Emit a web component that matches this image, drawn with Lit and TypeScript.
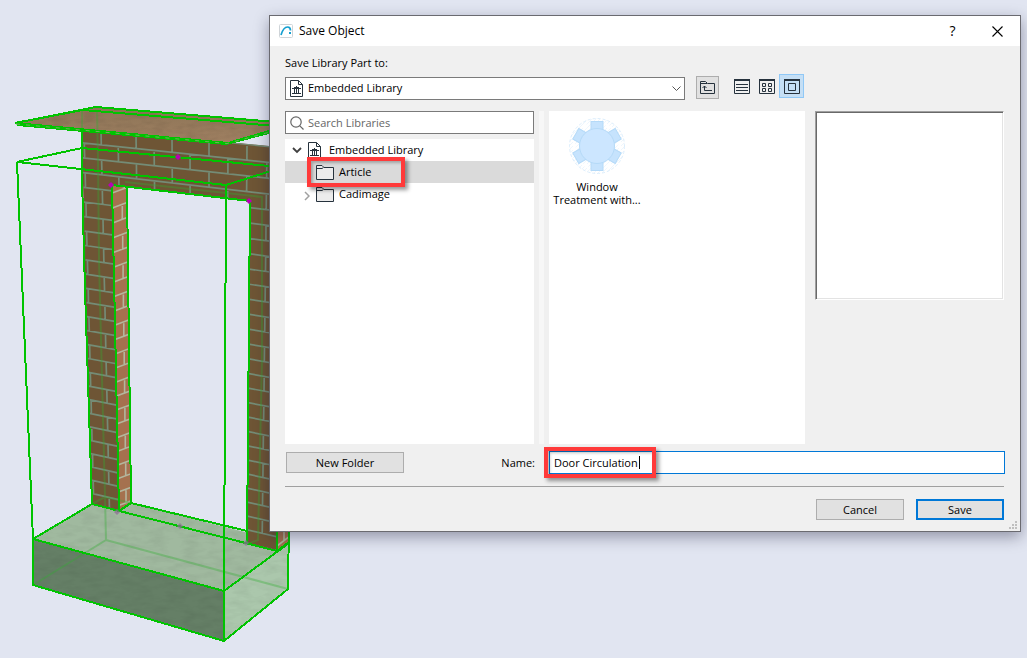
import { LitElement, html, svg, css } from "lit";
import { customElement, property, state } from "lit/decorators.js";

type Pt = [number, number];

const line = (...pts: Pt[]) => "M" + pts.map((p) => p.map((n) => n.toFixed(1)).join(" ")).join("L");

/* Brick courses of the front wall, drawn in the wall's own perspective. */
const frontMortar = (() => {
  const place = (x: number, y: number): Pt => {
    const t = (y - 130) / 374;
    const px = x + t * (10 - (x - 82) * 0.081);
    return [px, y + (px - 82) * (0.1 + 0.14 * t)];
  };
  const even = [101, 136, 172, 209, 247, 286];
  const odd = [84, 118, 154, 190, 228, 267, 300];
  let d = "";
  let y = 128;
  let step = 14.9;
  for (let row = 0; y < 510; row++) {
    const next = y + step;
    d += line(place(82, y), place(300, y));
    for (const x of row % 2 ? odd : even) d += line(place(x, y), place(x, next));
    y = next;
    step -= 0.075;
  }
  return d;
})();

const sideMortar = (() => {
  let d = "";
  let y = 191;
  let step = 15;
  for (let row = 0; y < 520; row++) {
    const lean = ((y - 185) / 320) * 6;
    d += line([112 + lean, y + 2], [128 + lean, y - 4]);
    if (row % 2) d += line([122 + lean * 0.7, y], [122 + lean * 0.7, y + step - 1]);
    y += step;
    step -= 0.075;
  }
  return d;
})();

@customElement("model-view")
export class ModelView extends LitElement {
  static styles = css`
    :host { display: block; overflow: hidden; }
    svg { display: block; }
    .edge { fill: none; stroke: #00c400; stroke-width: 2; shape-rendering: crispEdges; }
    .hidden { fill: none; stroke: #30b030; stroke-width: 2; opacity: 0.35; }
    .front { stroke: #748c76; stroke-width: 1.7; fill: none; }
    .side { stroke: #b3b69d; stroke-width: 1.6; fill: none; }
  `;

  render() {
    const spots: Pt[] = [[178, 157], [111, 185], [249, 201]];
    const faint: Pt[] = [[117, 512], [180, 526], [246, 543]];
    return html`<svg width="300" height="658" viewBox="0 0 300 658" role="img" aria-label="Brick door model">
      <defs>
        <linearGradient id="roof" x1="0" y1="0" x2="0" y2="1">
          <stop offset="0" stop-color="#8c7456" /><stop offset="1" stop-color="#a08062" />
        </linearGradient>
        <filter id="grain" x="0" y="0" width="1" height="1">
          <feTurbulence type="fractalNoise" baseFrequency="0.06 0.16" numOctaves="3" seed="4" />
          <feColorMatrix values="0 0 0 0 0  0 0 0 0 0  0 0 0 0 0  0.8 0 0 0 -0.3" />
          <feComposite in2="SourceGraphic" operator="in" />
        </filter>
        <clipPath id="frontClip"><path d="M82 128L289 148V542L277 551L247 544L250 201L112 185L119 511L92 504L85 290Z" /></clipPath>
        <clipPath id="sideClip"><path d="M112 185L127 188L131 503L119 511Z" /></clipPath>
      </defs>
      <path fill="#a0b99f" d="M33 539L92 504L131 503L289 543L224 591Z" />
      <path fill="#657f66" d="M33 539L224 591V641L33 585Z" />
      <path fill="#abc7ac" d="M224 591L289 543V589L224 641Z" />
      <path opacity="0.14" filter="url(#grain)" d="M33 539L92 504L131 503L289 543V589L224 641L33 585Z" />
      <g clip-path="url(#frontClip)">
        <rect x="80" y="120" width="220" height="440" fill="#6e5535" />
        <path class="front" d=${frontMortar} />
        <path fill="#a5714f" d="M277 400H300V545L277 551Z" />
        <path class="side" d="M277 546L290 536M284 541V530" />
      </g>
      <g clip-path="url(#sideClip)">
        <rect x="110" y="180" width="24" height="335" fill="#a5714f" />
        <path class="side" d=${sideMortar} />
      </g>
      <path fill="url(#roof)" d="M15 123L96 107L300 123V125L228 143Z" />
      <path opacity="0.2" filter="url(#grain)" d="M15 123L96 107L300 123V125L228 143Z" />
      <path class="hidden" d="M82 110V130M97 110L98 160L99 260L105 497L106 540L33 585M106 540L288 589M105 497L92 504M105 497L131 503M125 182L262 197L262 360L258 540L247 544" />
      <path class="edge" d="M15 123L96 107L300 124M83 110L300 128M15 123L228 143L300 122M17 125L226 144L300 125M15 123L83 110
        M82 130V178L85 290L92 504M112 185L250 201L247 544M112 185L119 511M127 188L131 503
        M17 162L82 148L300 169M17 162L226 185L300 162M17 162L33 539M226 185L224 591
        M33 539L92 504L277 551L289 542M131 503L247 531M119 511L131 503M33 539L224 591L289 543M33 539V585L224 641L288 589L289 520M224 591V641M277 520V551" />
      <path fill="none" stroke="#75ac60" stroke-dasharray="4 6" d="M16 124L227 143.500L300 124" />
      ${spots.map(([x, y]) => svg`<path fill="#b800b8" d="M${x} ${y - 3}l3 3l-3 3l-3 -3z" />`)}
      ${faint.map(([x, y]) => svg`<path fill="#8c6a94" opacity=".7" d="M${x} ${y - 3}l3 3l-3 3l-3 -3z" />`)}
    </svg>`;
  }
}

const libraryIcon = svg`<svg class="glyph" width="13" height="17" viewBox="0 0 13 17" fill="none" stroke="#26323d">
  <path d="M8.500 .5H.5V16.500H12.500V4.500Z" fill="#fff" /><path d="M8.500 .5V4.500H12.500" />
  <path d="M2 8.500H11M4 7.500H9M6 6.500H7" /><path d="M4.500 9V13M6.500 9V13M8.500 9V13" /><path d="M2 13.500H11" />
</svg>`;

const folderIcon = svg`<svg class="glyph" width="18" height="15" viewBox="0 0 18 15" fill="#ececec" stroke="#26323d">
  <path d="M.5 14.500V.5H6L8 2.500H17.500V14.500Z" /><path d="M.5 3.500H6L7.500 2.500" fill="none" />
</svg>`;

const frame = svg`<path d="M.5 1V14.500H15.500V1" /><path d="M0 1H16" stroke-width="2" />`;

const viewModes = [
  { id: "list", label: "List", art: svg`${frame}<path d="M2 5.500H14M2 8.500H14M2 11.500H14" />` },
  { id: "grid", label: "Small icons", art: svg`${frame}<path d="M3.500 4.500h3v3h-3zM9.500 4.500h3v3h-3zM3.500 9.500h3v3h-3zM9.500 9.500h3v3h-3z" />` },
  { id: "large", label: "Large icons", art: svg`${frame}<path d="M4.500 4.500h7v7h-7z" />` },
];

@customElement("save-dialog")
export class SaveDialog extends LitElement {
  @property() heading = "Save Object";
  @state() private view = "large";

  static styles = css`
    :host {
      display: block;
      box-sizing: border-box;
      border: 1px solid #6a6a70;
      background: #f0f0f0;
      color: #000;
      font: 11px/16px "Open Sans", "Noto Sans", sans-serif;
      box-shadow: 0 5px 14px rgba(20, 20, 50, 0.38);
      position: relative;
    }
    * { box-sizing: border-box; }
    svg { display: block; flex: none; }
    button, input, select { font: inherit; color: inherit; margin: 0; border-radius: 0; outline: none; }
    header { display: flex; align-items: center; height: 30px; padding: 0; padding-left: 9px; background: #fff; }
    h1 { flex: 1; margin: 0 0 0 6px; font: inherit; font-size: 12px; }
    .caption { display: grid; place-items: center; width: 45px; height: 30px; padding: 0; border: 0; background: none; font-size: 14px; }
    .body { padding: 9px 16px 11px 15px; }
    .toolbar { display: flex; align-items: center; margin: 3px 0 11px; height: 26px; }
    .combo { position: relative; width: 400px; height: 23px; margin-top: 2px; }
    .combo select { appearance: none; display: block; width: 100%; height: 100%; padding: 0 24px 0 22px; border: 1px solid #7a7a7a; background: #fff; }
    .combo .glyph { position: absolute; left: 5px; top: 3px; pointer-events: none; }
    .combo .chevron { position: absolute; right: 4px; top: 9px; pointer-events: none; }
    .up { display: grid; place-items: center; width: 23px; height: 23px; margin: 0 10px 0 11px; padding: 0; border: 1px solid #adadad; background: #e1e1e1; }
    .modes { display: flex; align-self: flex-start; }
    .mode { display: grid; place-items: center; width: 25px; height: 24px; padding: 0; border: 1px solid transparent; background: none; }
    .mode.active { border-color: #90c8f6; background: #c5dff5; }
    .panes { display: grid; grid-template-columns: 249px 5px minmax(0, 1fr) 189px; column-gap: 5px; height: 333px; }
    .libraries { display: flex; flex-direction: column; gap: 5px; }
    .search { display: flex; align-items: center; gap: 4px; height: 23px; padding: 0 4px; border: 1px solid #7a7a7a; background: #fff; }
    .search input { flex: 1; min-width: 0; padding: 0; border: 0; background: none; }
    .search input::placeholder { color: #666; opacity: 1; }
    .tree { flex: 1; margin: 0; padding: 0; list-style: none; background: #fff; }
    .tree li { display: flex; align-items: center; height: 22px; position: relative; }
    .root { padding-left: 7px; gap: 6px; }
    .root span { margin-left: 2px; }
    .child { padding-left: 31px; gap: 5px; }
    .child.selected { background: #dadada; }
    .child .twist { position: absolute; left: 19px; top: 8px; }
    .splitter { background: #f7f7f7; }
    .items { margin-right: 5px; background: #fff; padding: 6px 0 0 4px; }
    .item { display: flex; flex-direction: column; align-items: center; gap: 5px; width: 88px; line-height: 13px; text-align: center; white-space: nowrap; }
    .preview { height: 189px; background: #fff; border: 1px solid; border-color: #a0a0a0 #fff #fff #a0a0a0; box-shadow: inset 1px 1px #696969, inset -1px -1px #e3e3e3; }
    .naming { display: flex; align-items: center; margin-top: 7px; height: 23px; }
    .push { height: 21px; padding: 0; border: 1px solid #adadad; background: #e1e1e1; line-height: 18px; }
    .folder { width: 118px; margin-left: 1px; }
    .naming label { flex: none; width: 145px; padding: 0 14px 0 0; text-align: right; }
    .field { position: relative; flex: 1; height: 23px; margin-right: -1px; }
    .field input { display: block; width: 100%; height: 100%; padding: 0 4px; border: 1px solid #0078d7; background: #fff; }
    .caret { position: absolute; left: 90px; top: 5px; width: 1px; height: 13px; background: #000; }
    .mark { position: absolute; border: 4px solid #ff3a3a; box-shadow: 3px 3px 4px rgba(0, 0, 0, 0.4), inset 2px 2px 3px rgba(0, 0, 0, 0.25); pointer-events: none; z-index: 1; }
    .mark-tree { left: 22px; top: -4px; width: 98px; height: 30px; }
    .mark-name { left: -5px; top: -4px; width: 112px; height: 31px; }
    .actions { display: flex; justify-content: flex-end; gap: 12px; margin-top: 12px; padding-top: 12px; border-top: 1px solid #a0a0a0; }
    .actions .push { width: 88px; }
    .actions .primary { border: 2px solid #0078d7; line-height: 16px; }
    .grip { position: absolute; right: 3px; bottom: 2px; }
  `;

  render() {
    return html`
      <header>
        <svg width="14" height="14" viewBox="0 0 14 14" fill="none">
          <rect x=".5" y=".5" width="13" height="13" rx="1" fill="#fff" stroke="#cfd4d8" />
          <path d="M2 11C3.500 6 6 3 8.500 3C10.500 3 11.500 4.500 11.500 6.500" stroke="#159fd0" stroke-width="1.700" />
          <rect x="10" y="8" width="2" height="2" fill="#159fd0" />
        </svg>
        <h1>${this.heading}</h1>
        <button class="caption" aria-label="Help">?</button>
        <button class="caption" aria-label="Close">
          <svg width="11" height="11" viewBox="0 0 11 11" stroke="#000" stroke-width="1.100"><path d="M.5 .5L10.500 10.500M10.500 .5L.5 10.500" /></svg>
        </button>
      </header>
      <div class="body">
        <label for="target">Save Library Part to:</label>
        <div class="toolbar">
          <div class="combo">
            <select id="target"><option>Embedded Library</option></select>
            ${libraryIcon}
            <svg class="chevron" width="9" height="6" viewBox="0 0 9 6" fill="none" stroke="#555"><path d="M.5 .5L4.500 4.500L8.500 .5" /></svg>
          </div>
          <button class="up" aria-label="Up one level">
            <svg width="15" height="13" viewBox="0 0 15 13" fill="none" stroke="#26323d">
              <path d="M.5 12.500V.5H5.500L7.500 2.500H14.500V12.500Z" /><path d="M.5 2.500H7M12 9.500H4.500V5M2.500 7L4.500 5L6.500 7" />
            </svg>
          </button>
          <div class="modes">
            ${viewModes.map((m) => html`
              <button class="mode ${m.id === this.view ? "active" : ""}" aria-label=${m.label}
                aria-pressed=${m.id === this.view} @click=${() => (this.view = m.id)}>
                <svg width="16" height="15" viewBox="0 0 16 15" fill="none" stroke="#26323d">${m.art}</svg>
              </button>`)}
          </div>
        </div>
        <div class="panes">
          <div class="libraries">
            <div class="search">
              <svg width="14" height="14" viewBox="0 0 14 14" fill="none" stroke="#666" stroke-width="1.200"><circle cx="6" cy="6" r="5.200" /><path d="M9.800 9.800L13.500 13.500" /></svg>
              <input type="text" placeholder="Search Libraries" aria-label="Search Libraries" />
            </div>
            <ul class="tree">
              <li class="root">
                <svg width="10" height="7" viewBox="0 0 10 7" fill="none" stroke="#404040" stroke-width="1.800"><path d="M1 1L5 5L9 1" /></svg>
                ${libraryIcon}<span>Embedded Library</span>
              </li>
              <li class="child selected">${folderIcon}<span>Article</span><i class="mark mark-tree"></i></li>
              <li class="child">
                <svg class="twist" width="6" height="10" viewBox="0 0 6 10" fill="none" stroke="#a0a0a0" stroke-width="1.500"><path d="M1 1L5 5L1 9" /></svg>
                ${folderIcon}<span>Cadimage</span>
              </li>
            </ul>
          </div>
          <div class="splitter"></div>
          <div class="items">
            <div class="item">
              <svg width="58" height="58" viewBox="-29 -29 58 58">
                <defs><pattern id="hatch" width="4" height="4" patternUnits="userSpaceOnUse"><path d="M0 4L4 0" stroke="#eaf4fd" stroke-width=".8" /></pattern></defs>
                <circle r="27.500" fill="url(#hatch)" stroke="#ddeefc" stroke-dasharray="3 2" />
                ${[30, 90, 150, 210, 270, 330].map((a) => svg`<path d="M0 -20.500L6 -24H-6Z" fill="#fff" transform="rotate(${a})" />`)}
                ${[0, 60, 120, 180, 240, 300].map((a) => svg`<rect x="-6" y="-24.500" width="12" height="12" fill="#c6e3fd" stroke="#b5daf8" transform="rotate(${a})" />`)}
                <circle r="17.500" fill="#cce6ff" stroke="#b5daf8" />
              </svg>
              <span>Window<br />Treatment with...</span>
            </div>
          </div>
          <div class="preview"></div>
        </div>
        <div class="naming">
          <button class="push folder">New Folder</button>
          <label for="name">Name:</label>
          <div class="field">
            <input id="name" type="text" value="Door Circulation" />
            <i class="caret"></i><i class="mark mark-name"></i>
          </div>
        </div>
        <div class="actions">
          <button class="push">Cancel</button>
          <button class="push primary">Save</button>
        </div>
      </div>
      <svg class="grip" width="8" height="8" viewBox="0 0 8 8" fill="#bfbfbf"><path d="M6 0h2v2h-2zM3 3h2v2h-2zM6 3h2v2h-2zM0 6h2v2h-2zM3 6h2v2h-2zM6 6h2v2h-2z" /></svg>
    `;
  }
}

@customElement("app-root")
export class AppRoot extends LitElement {
  static styles = css`
    :host { display: block; position: relative; min-height: 100vh; overflow: hidden; background: #e1e5f1; }
    model-view { position: absolute; left: 0; top: 0; }
    save-dialog { position: absolute; left: 269px; right: 6px; top: 15px; }
  `;

  render() {
    return html`<model-view></model-view><save-dialog></save-dialog>`;
  }
}
